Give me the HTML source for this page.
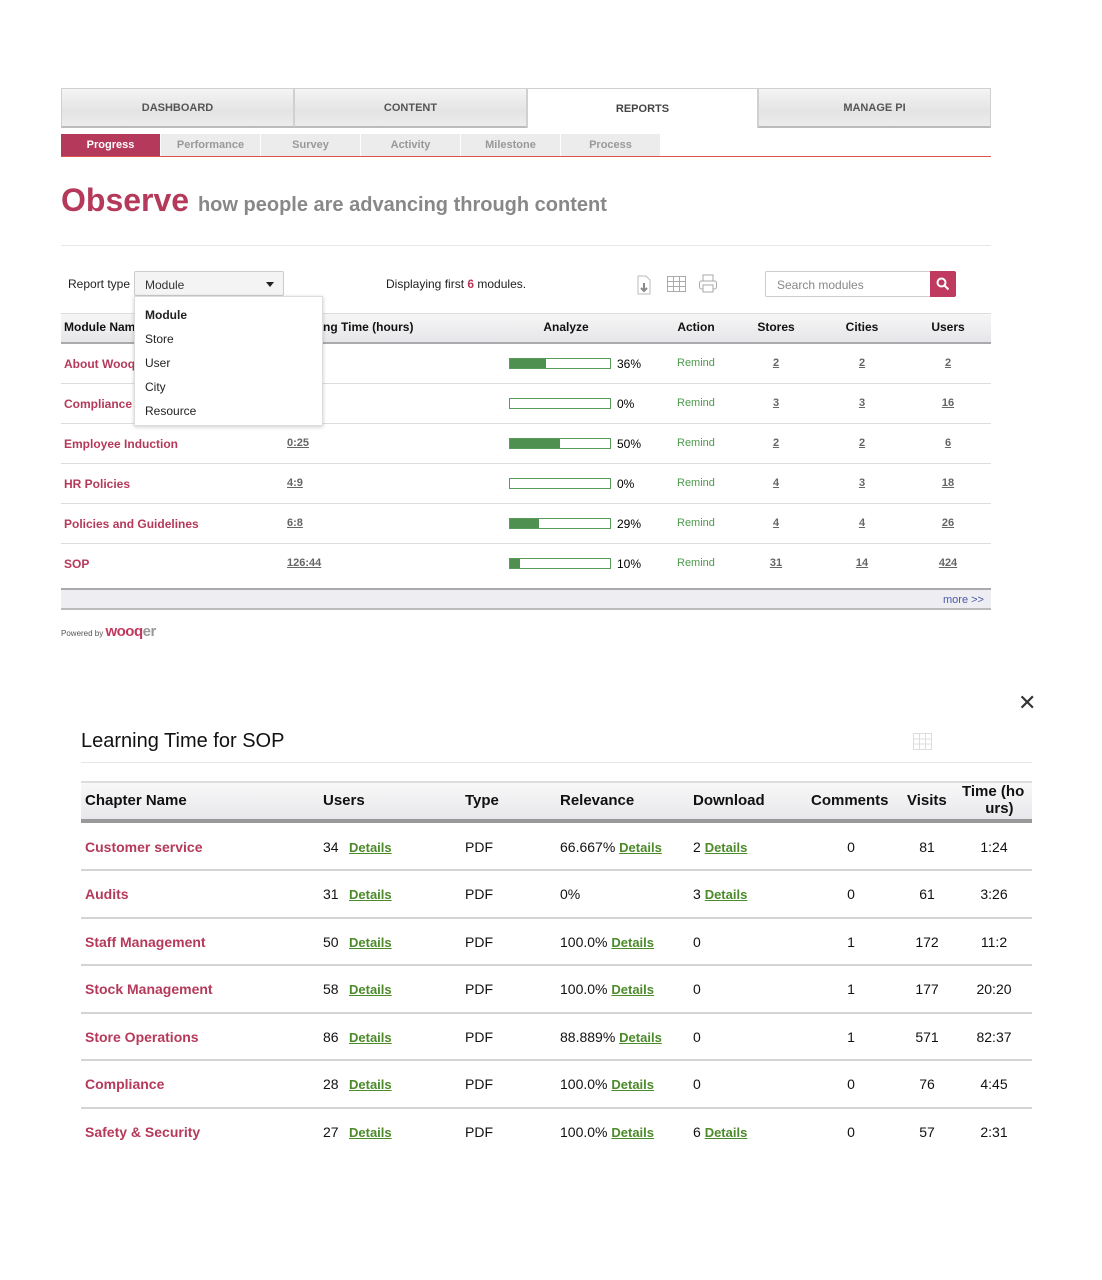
<!DOCTYPE html>
<html><head><meta charset="utf-8"><style>
*{margin:0;padding:0;box-sizing:border-box}
body{width:1102px;height:1280px;background:#fff;position:relative;font-family:"Liberation Sans",Arial,sans-serif;overflow:hidden}
.a{position:absolute;white-space:nowrap}
.tab{position:absolute;top:88px;height:40px;background:linear-gradient(#f4f4f4,#e4e4e4 60%,#ececec);border:1px solid #d0d0d0;border-bottom:2px solid #bbb;font-size:11px;font-weight:bold;color:#555;text-align:center;line-height:38px}
.sub{position:absolute;top:134px;height:22px;width:99px;background:#ececec;color:#999;font-size:11px;font-weight:bold;text-align:center;line-height:22px}
.rn{color:#b5395a;font-weight:bold;font-size:12px}
.u{color:#666;font-size:11px;font-weight:bold;text-decoration:underline}
.bar{position:absolute;left:509px;width:102px;height:11px;border:1px solid #5a9a5a;background:#fff}
.bar i{display:block;height:100%;background:#4f8f4f}
.rl{position:absolute;left:61px;width:930px;height:1px;background:#ddd}
.rm{color:#4a9a4a;font-size:11px}
.h{font-weight:bold;font-size:12px;color:#111}
.c{transform:translateX(-50%)}
.bn{color:#b5395a;font-weight:bold;font-size:14px}
.bt{font-size:14px;color:#111}
.d{color:#4c8a2a;font-weight:bold;font-size:13px;text-decoration:underline}
.bh{font-weight:bold;font-size:15px;color:#111}
.bl{position:absolute;left:81px;width:951px;height:2px;background:#d4d4d4}
</style></head><body>

<div class="tab" style="left:61px;width:233px">DASHBOARD</div>
<div class="tab" style="left:294px;width:233px">CONTENT</div>
<div class="tab" style="left:527px;width:231px;background:#fff;border-bottom:none;color:#444;line-height:40px">REPORTS</div>
<div class="tab" style="left:758px;width:233px">MANAGE PI</div>

<div class="sub" style="left:61px;background:#b5395a;color:#fff">Progress</div>
<div class="sub" style="left:161px">Performance</div>
<div class="sub" style="left:261px">Survey</div>
<div class="sub" style="left:361px">Activity</div>
<div class="sub" style="left:461px">Milestone</div>
<div class="sub" style="left:561px">Process</div>
<div class="a" style="left:61px;top:156px;width:930px;height:1px;background:#d9534f"></div>

<div class="a" style="left:61px;top:182px;font-size:32px;font-weight:bold;color:#b5395a">Observe <span style="font-size:20px;color:#888">how people are advancing through content</span></div>
<div class="a" style="left:61px;top:245px;width:930px;height:1px;background:#e8e8e8"></div>

<div class="a" style="left:68px;top:277px;font-size:12px;color:#222">Report type</div>
<div class="a" style="left:134px;top:271px;width:150px;height:25px;background:#f4f4f4;border:1px solid #ccc;border-radius:2px;font-size:12px;color:#333;padding:6px 10px">Module<span style="position:absolute;right:9px;top:10px;border:4px solid transparent;border-top:5px solid #222"></span></div>
<div class="a" style="left:386px;top:277px;font-size:12px;color:#222">Displaying first <span style="color:#b5395a;font-weight:bold">6</span> modules.</div>

<svg class="a" style="left:636px;top:275px" width="16" height="20" viewBox="0 0 16 20"><path d="M2 1h8l4 4v14H2z" fill="none" stroke="#bbb"/><path d="M8 8v8M5 13l3 3 3-3" stroke="#888" stroke-width="2" fill="none"/></svg>
<svg class="a" style="left:667px;top:276px" width="19" height="16" viewBox="0 0 19 16"><rect x=".5" y=".5" width="18" height="15" fill="none" stroke="#aaa"/><path d="M.5 5.5h18M.5 10.5h18M6.5 .5v15M12.5 .5v15" stroke="#aaa"/></svg>
<svg class="a" style="left:698px;top:274px" width="20" height="20" viewBox="0 0 20 20"><rect x="5" y="1" width="10" height="6" fill="none" stroke="#aaa"/><rect x="1.5" y="7" width="17" height="8" rx="2" fill="none" stroke="#aaa"/><rect x="5" y="11" width="10" height="7" fill="#fff" stroke="#aaa"/></svg>

<div class="a" style="left:765px;top:271px;width:166px;height:26px;border:1px solid #ccc;border-right:none;border-radius:2px 0 0 2px;font-size:12px;color:#888;padding:6px 11px">Search modules</div>
<div class="a" style="left:930px;top:271px;width:26px;height:26px;background:#c0395e;border-radius:0 2px 2px 0"><svg width="26" height="26"><circle cx="11.5" cy="11.5" r="4" fill="none" stroke="#fff" stroke-width="2"/><path d="M14.5 14.5l4 4" stroke="#fff" stroke-width="2"/></svg></div>

<div class="a" style="left:61px;top:313px;width:930px;height:31px;background:linear-gradient(#f6f6f6,#e6e6ea);border-top:1px solid #ddd;border-bottom:2px solid #aaa"></div>
<div class="a h" style="left:64px;top:320px">Module Name</div>
<div class="a h" style="left:287px;top:320px">Learning Time (hours)</div>
<div class="a h c" style="left:566px;top:320px">Analyze</div>
<div class="a h c" style="left:696px;top:320px">Action</div>
<div class="a h c" style="left:776px;top:320px">Stores</div>
<div class="a h c" style="left:862px;top:320px">Cities</div>
<div class="a h c" style="left:948px;top:320px">Users</div>

<!-- rows -->
<div class="a rn" style="left:64px;top:357px">About Wooqer</div>
<div class="bar" style="top:358px"><i style="width:36%"></i></div><div class="a" style="left:617px;top:357px;font-size:12px">36%</div>
<div class="a rm" style="left:677px;top:357px">Remind</div>
<div class="a u c" style="left:776px;top:357px">2</div><div class="a u c" style="left:862px;top:357px">2</div><div class="a u c" style="left:948px;top:357px">2</div>
<div class="rl" style="top:383px"></div>

<div class="a rn" style="left:64px;top:397px">Compliance</div>
<div class="bar" style="top:398px"></div><div class="a" style="left:617px;top:397px;font-size:12px">0%</div>
<div class="a rm" style="left:677px;top:397px">Remind</div>
<div class="a u c" style="left:776px;top:397px">3</div><div class="a u c" style="left:862px;top:397px">3</div><div class="a u c" style="left:948px;top:397px">16</div>
<div class="rl" style="top:423px"></div>

<div class="a rn" style="left:64px;top:437px">Employee Induction</div><div class="a u" style="left:287px;top:437px">0:25</div>
<div class="bar" style="top:438px"><i style="width:50%"></i></div><div class="a" style="left:617px;top:437px;font-size:12px">50%</div>
<div class="a rm" style="left:677px;top:437px">Remind</div>
<div class="a u c" style="left:776px;top:437px">2</div><div class="a u c" style="left:862px;top:437px">2</div><div class="a u c" style="left:948px;top:437px">6</div>
<div class="rl" style="top:463px"></div>

<div class="a rn" style="left:64px;top:477px">HR Policies</div><div class="a u" style="left:287px;top:477px">4:9</div>
<div class="bar" style="top:478px"></div><div class="a" style="left:617px;top:477px;font-size:12px">0%</div>
<div class="a rm" style="left:677px;top:477px">Remind</div>
<div class="a u c" style="left:776px;top:477px">4</div><div class="a u c" style="left:862px;top:477px">3</div><div class="a u c" style="left:948px;top:477px">18</div>
<div class="rl" style="top:503px"></div>

<div class="a rn" style="left:64px;top:517px">Policies and Guidelines</div><div class="a u" style="left:287px;top:517px">6:8</div>
<div class="bar" style="top:518px"><i style="width:29%"></i></div><div class="a" style="left:617px;top:517px;font-size:12px">29%</div>
<div class="a rm" style="left:677px;top:517px">Remind</div>
<div class="a u c" style="left:776px;top:517px">4</div><div class="a u c" style="left:862px;top:517px">4</div><div class="a u c" style="left:948px;top:517px">26</div>
<div class="rl" style="top:543px"></div>

<div class="a rn" style="left:64px;top:557px">SOP</div><div class="a u" style="left:287px;top:557px">126:44</div>
<div class="bar" style="top:558px"><i style="width:10%"></i></div><div class="a" style="left:617px;top:557px;font-size:12px">10%</div>
<div class="a rm" style="left:677px;top:557px">Remind</div>
<div class="a u c" style="left:776px;top:557px">31</div><div class="a u c" style="left:862px;top:557px">14</div><div class="a u c" style="left:948px;top:557px">424</div>

<div class="a" style="left:61px;top:588px;width:930px;height:22px;background:#ededf2;border-top:2px solid #aaa;border-bottom:2px solid #bbb"></div>
<div class="a" style="left:943px;top:594px;font-size:11px;color:#4a5aa8">more &gt;&gt;</div>

<!-- dropdown -->
<div class="a" style="left:134px;top:296px;width:189px;height:130px;background:#fff;border:1px solid #ddd;box-shadow:0 1px 4px rgba(0,0,0,.2);font-size:12px;color:#222">
<div class="a" style="left:10px;top:11px;font-weight:bold">Module</div>
<div class="a" style="left:10px;top:35px">Store</div>
<div class="a" style="left:10px;top:59px">User</div>
<div class="a" style="left:10px;top:83px">City</div>
<div class="a" style="left:10px;top:107px">Resource</div>
</div>

<div class="a" style="left:61px;top:623px;font-size:8px;color:#555">Powered by <span style="font-size:15px;font-weight:bold;color:#c0395e;letter-spacing:-0.5px">wooq<span style="color:#999">er</span></span></div>

<!-- modal -->
<div class="a" style="left:1018px;top:690px;font-size:22px;color:#333">✕</div>
<div class="a" style="left:81px;top:730px;font-size:20px;color:#111">Learning Time for SOP</div>
<svg class="a" style="left:913px;top:733px" width="19" height="17"><rect x=".5" y=".5" width="18" height="16" fill="none" stroke="#ddd"/><path d="M.5 6h18M.5 11h18M6.5 .5v16M12.5 .5v16" stroke="#ddd"/></svg>
<div class="a" style="left:81px;top:762px;width:951px;height:1px;background:#e6e6e6"></div>

<div class="a" style="left:81px;top:781px;width:951px;height:42px;background:linear-gradient(#f8f8f8,#e8e8ec);border-top:2px solid #ddd;border-bottom:4px solid #999"></div>
<div class="a bh" style="left:85px;top:792px">Chapter Name</div>
<div class="a bh" style="left:323px;top:792px">Users</div>
<div class="a bh" style="left:465px;top:792px">Type</div>
<div class="a bh" style="left:560px;top:792px">Relevance</div>
<div class="a bh" style="left:693px;top:792px">Download</div>
<div class="a bh" style="left:811px;top:792px">Comments</div>
<div class="a bh" style="left:907px;top:792px">Visits</div>
<div class="a bh" style="left:962px;top:783px;text-align:center;line-height:17px">Time (ho<br>&nbsp;&nbsp;&nbsp;urs)</div>

<div class="a" style="left:0;top:839px;width:1102px">
<!-- row template spacing 47.5 -->
</div>

<div class="a bn" style="left:85px;top:839px">Customer service</div><div class="a bt" style="left:323px;top:839px">34</div><div class="a d" style="left:349px;top:840px">Details</div><div class="a bt" style="left:465px;top:839px">PDF</div><div class="a bt" style="left:560px;top:839px">66.667% <span class="d">Details</span></div><div class="a bt" style="left:693px;top:839px">2 <span class="d">Details</span></div><div class="a bt c" style="left:851px;top:839px">0</div><div class="a bt c" style="left:927px;top:839px">81</div><div class="a bt c" style="left:994px;top:839px">1:24</div>
<div class="bl" style="top:869px"></div>

<div class="a bn" style="left:85px;top:886px">Audits</div><div class="a bt" style="left:323px;top:886px">31</div><div class="a d" style="left:349px;top:887px">Details</div><div class="a bt" style="left:465px;top:886px">PDF</div><div class="a bt" style="left:560px;top:886px">0%</div><div class="a bt" style="left:693px;top:886px">3 <span class="d">Details</span></div><div class="a bt c" style="left:851px;top:886px">0</div><div class="a bt c" style="left:927px;top:886px">61</div><div class="a bt c" style="left:994px;top:886px">3:26</div>
<div class="bl" style="top:917px"></div>

<div class="a bn" style="left:85px;top:934px">Staff Management</div><div class="a bt" style="left:323px;top:934px">50</div><div class="a d" style="left:349px;top:935px">Details</div><div class="a bt" style="left:465px;top:934px">PDF</div><div class="a bt" style="left:560px;top:934px">100.0% <span class="d">Details</span></div><div class="a bt" style="left:693px;top:934px">0</div><div class="a bt c" style="left:851px;top:934px">1</div><div class="a bt c" style="left:927px;top:934px">172</div><div class="a bt c" style="left:994px;top:934px">11:2</div>
<div class="bl" style="top:964px"></div>

<div class="a bn" style="left:85px;top:981px">Stock Management</div><div class="a bt" style="left:323px;top:981px">58</div><div class="a d" style="left:349px;top:982px">Details</div><div class="a bt" style="left:465px;top:981px">PDF</div><div class="a bt" style="left:560px;top:981px">100.0% <span class="d">Details</span></div><div class="a bt" style="left:693px;top:981px">0</div><div class="a bt c" style="left:851px;top:981px">1</div><div class="a bt c" style="left:927px;top:981px">177</div><div class="a bt c" style="left:994px;top:981px">20:20</div>
<div class="bl" style="top:1012px"></div>

<div class="a bn" style="left:85px;top:1029px">Store Operations</div><div class="a bt" style="left:323px;top:1029px">86</div><div class="a d" style="left:349px;top:1030px">Details</div><div class="a bt" style="left:465px;top:1029px">PDF</div><div class="a bt" style="left:560px;top:1029px">88.889% <span class="d">Details</span></div><div class="a bt" style="left:693px;top:1029px">0</div><div class="a bt c" style="left:851px;top:1029px">1</div><div class="a bt c" style="left:927px;top:1029px">571</div><div class="a bt c" style="left:994px;top:1029px">82:37</div>
<div class="bl" style="top:1059px"></div>

<div class="a bn" style="left:85px;top:1076px">Compliance</div><div class="a bt" style="left:323px;top:1076px">28</div><div class="a d" style="left:349px;top:1077px">Details</div><div class="a bt" style="left:465px;top:1076px">PDF</div><div class="a bt" style="left:560px;top:1076px">100.0% <span class="d">Details</span></div><div class="a bt" style="left:693px;top:1076px">0</div><div class="a bt c" style="left:851px;top:1076px">0</div><div class="a bt c" style="left:927px;top:1076px">76</div><div class="a bt c" style="left:994px;top:1076px">4:45</div>
<div class="bl" style="top:1107px"></div>

<div class="a bn" style="left:85px;top:1124px">Safety &amp; Security</div><div class="a bt" style="left:323px;top:1124px">27</div><div class="a d" style="left:349px;top:1125px">Details</div><div class="a bt" style="left:465px;top:1124px">PDF</div><div class="a bt" style="left:560px;top:1124px">100.0% <span class="d">Details</span></div><div class="a bt" style="left:693px;top:1124px">6 <span class="d">Details</span></div><div class="a bt c" style="left:851px;top:1124px">0</div><div class="a bt c" style="left:927px;top:1124px">57</div><div class="a bt c" style="left:994px;top:1124px">2:31</div>

</body></html>
